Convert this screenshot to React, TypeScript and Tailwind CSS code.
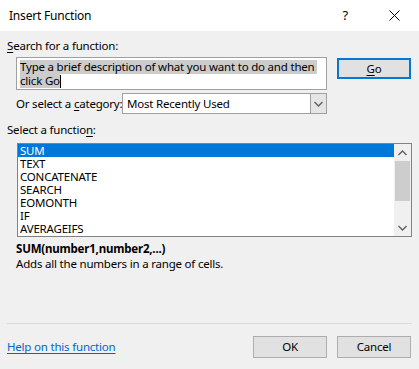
import React from 'react';

const font = { fontFamily: '"Noto Sans", "Open Sans", sans-serif' };

const functions = ['SUM', 'TEXT', 'CONCATENATE', 'SEARCH', 'EOMONTH', 'IF', 'AVERAGEIFS'];

const Chevron: React.FC<{ up?: boolean }> = ({ up }) => (
  <svg width="9" height="6" viewBox="0 0 9 6" className="block">
    <path
      d={up ? 'M0.5 5 L4.5 1 L8.5 5' : 'M0.5 1 L4.5 5 L8.5 1'}
      fill="none"
      stroke="#606060"
      strokeWidth="1.4"
    />
  </svg>
);

const App: React.FC = () => {
  return (
    <div
      className="w-[419px] h-[369px] flex flex-col text-[11.5px] tracking-[-0.2px] text-black overflow-hidden whitespace-nowrap"
      style={font}
    >
      {/* title bar */}
      <div className="h-[31px] bg-white flex items-center shrink-0">
        <span className="ml-[9px] text-[12px] tracking-[-0.2px]">Insert Function</span>
        <span className="ml-auto mr-[41px] text-[13px]">?</span>
        <svg width="11" height="11" viewBox="0 0 11 11" className="mr-[19px]">
          <path d="M0.5 0.5 L10.5 10.5 M10.5 0.5 L0.5 10.5" stroke="#000" strokeWidth="1" />
        </svg>
      </div>

      <div className="flex-1 bg-[#f0f0f0] px-[7px] flex flex-col">
        <div className="mt-[7px] leading-[15px]">
          <span className="underline underline-offset-2">S</span>earch for a function:
        </div>

        <div className="flex mt-[4px]">
          <div className="ml-[9px] w-[311px] h-[33px] bg-white border border-[#a0a0a0] px-[3px] pt-[2px] leading-[14px]">
            <div className="flex">
              <span className="bg-[#cccccc] pr-[3px]">Type a brief description of what you want to do and then</span>
            </div>
            <div className="flex items-center">
              <span className="bg-[#cccccc]">click Go</span>
              <span className="w-px h-[13px] bg-black" />
            </div>
          </div>
          <button className="ml-[10px] mt-px w-[74px] h-[21px] bg-[#e1e1e1] border-2 border-[#0078d7] leading-none">
            <span className="underline underline-offset-2">G</span>o
          </button>
        </div>

        <div className="flex items-center mt-[3px] ml-[9px]">
          <span className="w-[106px]">
            Or select a <span className="underline underline-offset-2">c</span>ategory:
          </span>
          <div className="w-[205px] h-[21px] bg-white border border-[#a0a0a0] flex items-center">
            <span className="ml-[4px] flex-1">Most Recently Used</span>
            <div className="w-[16px] h-full bg-[#e5e5e5] border-l border-[#a0a0a0] flex items-center justify-center">
              <Chevron />
            </div>
          </div>
        </div>

        <div className="mt-[8px] leading-[15px]">
          Select a functio<span className="underline underline-offset-2">n</span>:
        </div>

        <div className="mt-[6px] ml-[10px] w-[395px] h-[94px] bg-white border border-[#828282] flex">
          <div className="flex-1 leading-[13px]">
            {functions.map((f, i) => (
              <div
                key={f}
                className={
                  i === 0
                    ? 'h-[13px] pl-[2px] bg-[#0078d7] text-white'
                    : 'h-[13px] pl-[2px]'
                }
              >
                {f}
              </div>
            ))}
          </div>
          <div className="w-[17px] bg-[#f0f0f0] flex flex-col items-center">
            <div className="h-[17px] flex items-center justify-center">
              <Chevron up />
            </div>
            <div className="w-[15px] h-[40px] bg-[#cdcdcd]" />
            <div className="flex-1" />
            <div className="h-[17px] flex items-center justify-center">
              <Chevron />
            </div>
          </div>
        </div>

        <div className="mt-[4px] ml-[9px] font-bold leading-[15px]">SUM(number1,number2,...)</div>
        <div className="ml-[9px] leading-[15px]">Adds all the numbers in a range of cells.</div>

        <div className="mt-[52px] h-px bg-[#dcdcdc] w-[405px]" />

        <div className="flex items-center mt-[12px]">
          <span className="text-[#0066cc] underline underline-offset-2">Help on this function</span>
          <button className="ml-auto w-[74px] h-[22px] bg-[#e1e1e1] border border-[#adadad]">OK</button>
          <button className="ml-[10px] mr-[1px] w-[74px] h-[22px] bg-[#e1e1e1] border border-[#adadad]">Cancel</button>
        </div>
      </div>
    </div>
  );
};

export default App;
